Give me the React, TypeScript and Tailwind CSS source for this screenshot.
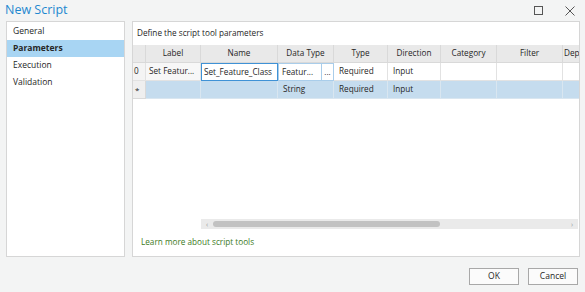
import React from "react";

const cols = [
  { name: "Label", w: 55 },
  { name: "Name", w: 77 },
  { name: "Data Type", w: 56 },
  { name: "Type", w: 54 },
  { name: "Direction", w: 53 },
  { name: "Category", w: 56 },
  { name: "Filter", w: 66 },
  { name: "Dependency", w: 80 },
];

export default function App() {
  const font = { fontFamily: '"Open Sans", "Noto Sans", sans-serif' };
  return (
    <div
      className="w-[585px] h-[292px] bg-[#f3f4f4] relative overflow-hidden text-[#262626] flex flex-col"
      style={font}
    >
      {/* Title bar */}
      <div className="h-[21px] flex items-center pl-[5px] pr-[8px] shrink-0">
        <div className="text-[12.5px] leading-none text-[#1e88d0]">New Script</div>
        <div className="ml-auto flex items-center gap-[22px] text-[#444]">
          <div className="w-[9px] h-[9px] border border-[#555]" />
          <svg width="10" height="10" viewBox="0 0 10 10" className="mr-[2px]">
            <path d="M0.5 0.5 L9.5 9.5 M9.5 0.5 L0.5 9.5" stroke="#555" strokeWidth="1" />
          </svg>
        </div>
      </div>

      {/* Body */}
      <div className="flex gap-[7px] pl-[6px] pr-[5px] h-[236px] shrink-0">
        {/* Left nav */}
        <div className="w-[119px] bg-white border border-[#d6d6d6] pt-[1px] text-[8.5px]">
          <div className="h-[17px] flex items-center pl-[6px]">General</div>
          <div className="h-[17px] flex items-center pl-[6px] bg-[#a8d5f3] font-bold">Parameters</div>
          <div className="h-[17px] flex items-center pl-[6px]">Execution</div>
          <div className="h-[17px] flex items-center pl-[6px]">Validation</div>
        </div>

        {/* Right panel */}
        <div className="flex-1 bg-white border border-[#d6d6d6] flex flex-col text-[8.2px] overflow-hidden">
          <div className="h-[23px] flex items-center pl-[4px] shrink-0">Define the script tool parameters</div>
          {/* Grid */}
          <div className="overflow-hidden">
            <div className="flex w-max">
              {/* Row header column */}
              <div className="flex flex-col w-[13px] shrink-0">
                <div className="h-[18px] bg-[#e9e9e9] border-r border-b border-[#d9d9d9]" />
                <div className="h-[18px] bg-[#f4f4f4] border-r border-b border-[#e2e2e2] flex items-center pl-[1px]">0</div>
                <div className="h-[18px] bg-[#efefef] border-r border-b border-[#d9d9d9] flex items-center pl-[2px] text-[8px]">*</div>
              </div>
              {cols.map((c) => (
                <div key={c.name} className="flex flex-col shrink-0" style={{ width: c.w }}>
                  <div className="h-[18px] bg-[#e9e9e9] border-r border-b border-[#d9d9d9] flex items-center justify-center whitespace-nowrap overflow-hidden">
                    {c.name === "Dependency" ? <span className="w-full pl-[1px]">Dep</span> : c.name}
                  </div>
                  <Row0Cell name={c.name} />
                  <div className="h-[18px] bg-[#c5dcee] border-r border-b border-[#d9e6f0] flex items-center pl-[5px] whitespace-nowrap">
                    {c.name === "Data Type" ? "String" : c.name === "Type" ? "Required" : c.name === "Direction" ? "Input" : ""}
                  </div>
                </div>
              ))}
            </div>
          </div>
          <div className="flex-1" />
          {/* Horizontal scrollbar */}
          <div className="flex h-[10px] shrink-0">
            <div className="w-[68px] shrink-0" />
            <div className="flex-1 bg-[#eaeaea] flex items-center mr-[1px]">
              <span className="w-[12px] text-center text-[7px] leading-none text-[#999]">‹</span>
              <div className="w-[227px] h-[6px] rounded-full bg-[#c2c2c2]" />
              <div className="flex-1" />
              <span className="w-[12px] text-center text-[7px] leading-none text-[#999]">›</span>
            </div>
          </div>
          <div className="h-[27px] flex items-center pl-[8px] text-[#3c7a23] shrink-0">Learn more about script tools</div>
        </div>
      </div>

      {/* Buttons */}
      <div className="flex justify-end gap-[9px] pr-[7px] pt-[11px] text-[8.5px]">
        <div className="w-[50px] h-[17px] border border-[#a8a8a8] bg-[#fbfbfb] flex items-center justify-center">OK</div>
        <div className="w-[50px] h-[17px] border border-[#a8a8a8] bg-[#fbfbfb] flex items-center justify-center">Cancel</div>
      </div>
    </div>
  );
}

function Row0Cell({ name }: { name: string }) {
  if (name === "Label") {
    return (
      <div className="h-[18px] bg-[#f7f7f7] border-r border-b border-[#e2e2e2] flex items-center pl-[3px] whitespace-nowrap">
        Set Featur...
      </div>
    );
  }
  if (name === "Name") {
    return (
      <div className="h-[18px] bg-white border border-[#3f92d6] flex items-center pl-[2px] whitespace-nowrap overflow-hidden">
        Set_Feature_Class
      </div>
    );
  }
  if (name === "Data Type") {
    return (
      <div className="h-[18px] bg-white border border-[#a9cdea] flex items-center whitespace-nowrap">
        <span className="flex-1 pl-[3px]">Featur...</span>
        <span className="w-[12px] h-full border-l border-[#a9cdea] flex items-center justify-center text-[8px]">...</span>
      </div>
    );
  }
  const txt = name === "Type" ? "Required" : name === "Direction" ? "Input" : "";
  return (
    <div className="h-[18px] bg-white border-r border-b border-[#e2e2e2] flex items-center pl-[5px] whitespace-nowrap">
      {txt}
    </div>
  );
}
